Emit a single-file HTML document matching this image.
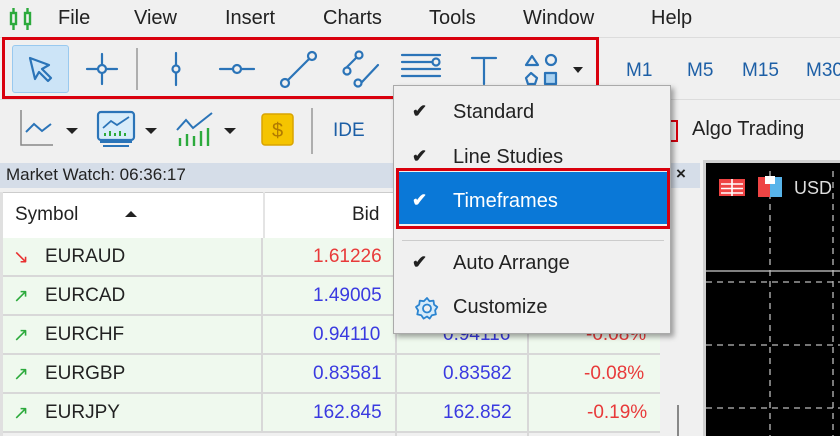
<!DOCTYPE html>
<html><head><meta charset="utf-8"><style>
*{margin:0;padding:0;box-sizing:border-box}
body{width:840px;height:436px;overflow:hidden;background:#f0f0f0;font-family:"Liberation Sans",sans-serif;position:relative;color:#222}
.a{position:absolute}
.m{font-size:20px;top:7px;color:#222}
.tf{font-size:19px;color:#1d5fa6;top:60px}
.row{position:absolute;left:3px;width:657px;height:39px;background:#eff9ee;border-bottom:2px solid #d8d8d8;font-size:19px}
.row span{position:absolute;top:8px}
.c1{left:0;width:260px;border-right:2px solid #d8d8d8;height:37px}
.mi{position:absolute;left:0;width:277px;font-size:20px;color:#222}
.mi b{position:absolute;left:18px;font-size:18px}
.mi span{position:absolute;left:59px}
</style></head><body>
<svg class="a" style="left:8px;top:6px" width="26" height="26" viewBox="0 0 26 26"><g stroke="#2caa3c" stroke-width="2.4" fill="none"><rect x="3" y="7" width="5" height="11"/><line x1="5.5" y1="2" x2="5.5" y2="7"/><line x1="5.5" y1="18" x2="5.5" y2="24"/><rect x="17" y="7" width="5" height="11"/><line x1="19.5" y1="2" x2="19.5" y2="7"/><line x1="19.5" y1="18" x2="19.5" y2="24"/></g></svg>
<div class="a m" style="left:58px">File</div>
<div class="a m" style="left:134px">View</div>
<div class="a m" style="left:225px">Insert</div>
<div class="a m" style="left:323px">Charts</div>
<div class="a m" style="left:429px">Tools</div>
<div class="a m" style="left:523px">Window</div>
<div class="a m" style="left:651px">Help</div>
<div class="a" style="left:0;top:37px;width:840px;height:1px;background:#dcdcdc"></div>
<div class="a" style="left:12px;top:45px;width:57px;height:48px;background:#cce4f7;border:1px solid #99c9ef;border-radius:3px"></div>
<svg class="a" style="left:0;top:38px" width="600" height="60" viewBox="0 0 600 60">
<g stroke="#2b74b8" stroke-width="2.2" fill="none" stroke-linecap="round" stroke-linejoin="round">
<path d="M30 20 L49 27 L42 31 L51 40 L48 43 L39 34 L35 41 Z"/>
<line x1="87" y1="31" x2="117" y2="31"/><line x1="102" y1="16" x2="102" y2="46"/><circle cx="102" cy="31" r="4" fill="#f0f0f0"/>
<line x1="176" y1="15" x2="176" y2="47"/><circle cx="176" cy="31" r="3.5" fill="#f0f0f0"/>
<line x1="220" y1="31" x2="254" y2="31"/><circle cx="237" cy="31" r="4" fill="#f0f0f0"/>
<line x1="286" y1="44" x2="310" y2="20"/><circle cx="285" cy="45" r="4" fill="#f0f0f0"/><circle cx="312" cy="18" r="4" fill="#f0f0f0"/>
<line x1="345" y1="31" x2="358" y2="18"/><line x1="362" y1="44" x2="378" y2="27"/><circle cx="347" cy="33" r="3.5" fill="#f0f0f0"/><circle cx="359" cy="17" r="3.5" fill="#f0f0f0"/><circle cx="358" cy="45" r="3.5" fill="#f0f0f0"/>
<line x1="402" y1="17" x2="440" y2="17"/><line x1="402" y1="24" x2="432" y2="24"/><circle cx="436" cy="24" r="3.5"/><line x1="402" y1="31" x2="440" y2="31"/><line x1="402" y1="38" x2="440" y2="38"/>
<line x1="472" y1="20" x2="496" y2="20"/><line x1="484" y1="20" x2="484" y2="46"/>
<path d="M526 27 L532 18 L538 27 Z"/><circle cx="551" cy="22" r="5"/><path d="M526 40 L531 35 L537 40 L535 46 L528 46 Z"/><rect x="545" y="35" width="11" height="11" fill="#a9d1f0" stroke="#2b74b8"/>
</g>
<line x1="137" y1="10" x2="137" y2="52" stroke="#999" stroke-width="1.5"/>
<path d="M573 29 L583 29 L578 35 Z" fill="#222"/>
</svg>
<div class="a" style="left:2px;top:37px;width:597px;height:62px;border:3px solid #d9000d"></div>
<div class="a tf" style="left:626px">M1</div>
<div class="a tf" style="left:687px">M5</div>
<div class="a tf" style="left:742px">M15</div>
<div class="a tf" style="left:806px">M30</div>
<div class="a" style="left:0;top:99px;width:840px;height:1px;background:#dcdcdc"></div>
<svg class="a" style="left:0;top:100px" width="420" height="60" viewBox="0 0 420 60">
<path d="M21 10 V45 H53" stroke="#888" stroke-width="1.5" fill="none"/>
<path d="M26 32 L34 24 L42 31 L51 24" stroke="#2b74b8" stroke-width="2" fill="none"/>
<path d="M66 28 L78 28 L72 34 Z" fill="#222"/>
<rect x="98" y="12" width="36" height="28" rx="3" fill="#d8ecfa" stroke="#2b74b8" stroke-width="2.2"/>
<path d="M100 42 H132 M103 46 H129" stroke="#2b74b8" stroke-width="2"/>
<path d="M103 28 L111 21 L117 25 L129 17" stroke="#2b74b8" stroke-width="1.8" fill="none"/>
<path d="M105 36v-3 M110 36v-5 M115 36v-3 M120 36v-5 M125 36v-3" stroke="#2caa3c" stroke-width="2"/>
<path d="M145 28 L157 28 L151 34 Z" fill="#222"/>
<path d="M177 30 L186 20 L193 28 L212 13" stroke="#2b74b8" stroke-width="2" fill="none"/>
<path d="M180 46v-8 M187 46v-12 M194 46v-10 M201 46v-15 M208 46v-18" stroke="#2caa3c" stroke-width="2.4"/>
<path d="M224 28 L236 28 L230 34 Z" fill="#222"/>
<rect x="262" y="14" width="31" height="31" rx="3" fill="#f5c400" stroke="#d9a400" stroke-width="1.5"/>
<text x="277.5" y="37" font-size="20" fill="#b07a00" text-anchor="middle" font-family="Liberation Sans">$</text>
<line x1="312" y1="8" x2="312" y2="54" stroke="#999" stroke-width="1.5"/>
</svg>
<div class="a" style="left:333px;top:120px;font-size:19px;color:#1d5fa6">IDE</div>
<div class="a" style="left:670px;top:120px;width:8px;height:22px;border:2px solid #d9000d;border-left:none"></div>
<div class="a" style="left:692px;top:118px;font-size:20px;color:#222">Algo Trading</div>
<div class="a" style="left:0;top:163px;width:700px;height:25px;background:#d5dde8"></div>
<div class="a" style="left:6px;top:165px;font-size:17px;color:#222">Market Watch: 06:36:17</div>
<div class="a" style="left:676px;top:164px;font-size:17px;font-weight:bold">×</div>
<div class="a" style="left:3px;top:192px;width:657px;height:46px;background:#fff;border-top:1px solid #ccc"></div>
<div class="a" style="left:263px;top:192px;width:2px;height:46px;background:#e4e4e4"></div>
<div class="a" style="left:15px;top:204px;font-size:19px">Symbol</div>
<svg class="a" style="left:125px;top:210px" width="12" height="8"><path d="M0 7 L6 1 L12 7Z" fill="#222"/></svg>
<div class="a" style="left:352px;top:204px;font-size:19px">Bid</div>
<div class="a" style="left:0;top:192px;width:3px;height:244px;background:#e0e0e0"></div>

<div class="row" style="top:238px"><div class="a c1"></div><span style="left:10px;color:#e83030">↘</span><span style="left:42px">EURAUD</span><span style="left:310px;color:#e83a3a">1.61226</span></div>
<div class="row" style="top:277px"><div class="a c1"></div><span style="left:10px;color:#2caa3c">↗</span><span style="left:42px">EURCAD</span><span style="left:310px;color:#3a3ae0">1.49005</span></div>
<div class="row" style="top:316px"><div class="a c1"></div><span style="left:10px;color:#2caa3c">↗</span><span style="left:42px">EURCHF</span><span style="left:310px;color:#3a3ae0">0.94110</span><span style="left:440px;color:#3a3ae0">0.94116</span><span style="left:583px;color:#e83a3a">-0.08%</span></div>
<div class="row" style="top:355px"><div class="a c1"></div><span style="left:10px;color:#2caa3c">↗</span><span style="left:42px">EURGBP</span><span style="left:310px;color:#3a3ae0">0.83581</span><span style="left:440px;color:#3a3ae0">0.83582</span><span style="left:581px;color:#e83a3a">-0.08%</span></div>
<div class="row" style="top:394px"><div class="a c1"></div><span style="left:10px;color:#2caa3c">↗</span><span style="left:42px">EURJPY</span><span style="left:310px;color:#3a3ae0">162.845</span><span style="left:440px;color:#3a3ae0">162.852</span><span style="left:584px;color:#e83a3a">-0.19%</span></div>
<div class="a" style="left:395px;top:238px;width:2px;height:198px;background:#d8d8d8"></div>
<div class="a" style="left:527px;top:238px;width:2px;height:198px;background:#d8d8d8"></div>
<div class="a" style="left:677px;top:405px;width:2px;height:31px;background:#888"></div>
<div class="a" style="left:703px;top:160px;width:137px;height:276px;background:#000;border:3px solid #cfcfcf;border-right:none;border-bottom:none"></div>
<svg class="a" style="left:706px;top:163px" width="134" height="273">
<line x1="0" y1="108" x2="134" y2="108" stroke="#aaa" stroke-width="1.5"/>
<g stroke="#bbb" stroke-width="1.3" stroke-dasharray="6 5"><line x1="0" y1="119" x2="134" y2="119"/><line x1="0" y1="182" x2="134" y2="182"/><line x1="0" y1="245" x2="134" y2="245"/><line x1="64" y1="8" x2="64" y2="273"/><line x1="127" y1="8" x2="127" y2="273"/></g>
<rect x="13" y="16" width="26" height="17" fill="#e44"/><path d="M15 21h22M15 25.5h22M15 30h22M26 16v17" stroke="#fff" stroke-width="1.6"/>
<rect x="52" y="14" width="12" height="20" fill="#e44"/><rect x="64" y="14" width="12" height="20" fill="#58b4ea"/><rect x="59" y="13" width="10" height="8" fill="#fff"/>
<text x="88" y="31" font-size="18" fill="#ddd" font-family="Liberation Sans">USD</text>
</svg>
<div class="a" style="left:393px;top:85px;width:278px;height:249px;background:#f0f0f0;border:1px solid #aaa;box-shadow:3px 3px 5px rgba(0,0,0,.35)">
<div class="mi" style="top:15px"><b>✔</b><span>Standard</span></div>
<div class="mi" style="top:60px"><b>✔</b><span>Line Studies</span></div>
<div class="a" style="left:3px;top:86px;width:271px;height:52px;background:#0a78d7"></div>
<div class="a" style="left:2px;top:82px;width:274px;height:61px;border:3px solid #d9000d"></div>
<div class="mi" style="top:104px;color:#fff"><b>✔</b><span>Timeframes</span></div>
<div class="a" style="left:8px;top:154px;width:262px;height:1px;background:#ccc"></div>
<div class="mi" style="top:166px"><b>✔</b><span>Auto Arrange</span></div>
<div class="mi" style="top:210px"><span>Customize</span></div>
<svg class="a" style="left:20px;top:210px" width="26" height="26" viewBox="0 0 26 26"><path d="M13 2l2.5 3.2 4-.6.6 4 3.2 2.4-2.2 3.4.8 4-4 .8-2.3 3.4L13 20.5l-3.4 2.1-2.3-3.4-4-.8.8-4L2 11l3.2-2.4.6-4 4 .6z" fill="#d6ebfa" stroke="#2b84d0" stroke-width="1.8" stroke-linejoin="round"/><circle cx="13" cy="12.5" r="4" fill="#f0f0f0" stroke="#2b84d0" stroke-width="1.8"/></svg>
</div>
</body></html>
